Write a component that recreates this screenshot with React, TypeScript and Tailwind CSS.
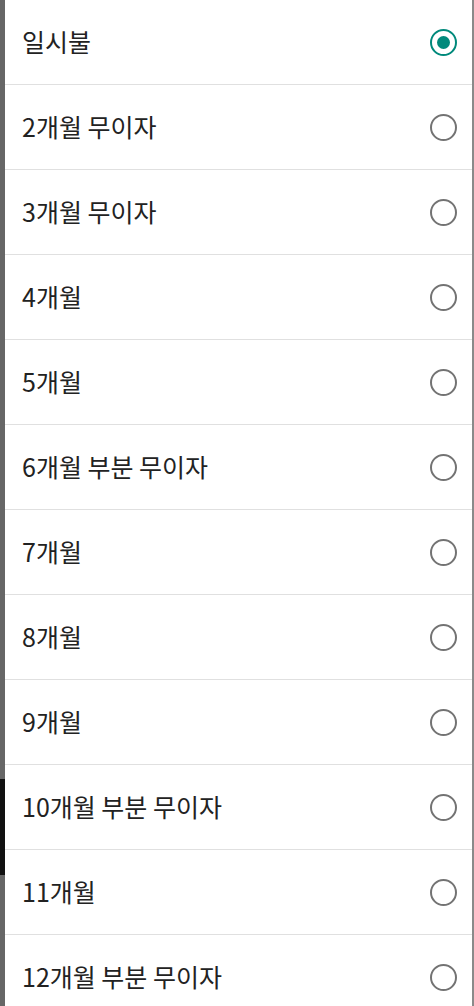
const options = [
  "일시불",
  "2개월 무이자",
  "3개월 무이자",
  "4개월",
  "5개월",
  "6개월 부분 무이자",
  "7개월",
  "8개월",
  "9개월",
  "10개월 부분 무이자",
  "11개월",
  "12개월 부분 무이자",
];

const Radio = ({ checked }: { checked: boolean }) => (
  <span
    className={`flex h-[27px] w-[27px] items-center justify-center rounded-full border-[2.5px] ${
      checked ? "border-[#00897b]" : "border-[#737373]"
    }`}
  >
    {checked && <span className="h-[13px] w-[13px] rounded-full bg-[#00897b]"></span>}
  </span>
);

const App = () => {
  const selected = 0;
  return (
    <div className="flex h-[1006px] w-[474px] overflow-hidden bg-[#666666]">
      <div className="flex w-[5px] shrink-0 flex-col">
        <div className="h-[779px] bg-[#666666]"></div>
        <div className="h-[96px] bg-[#111111]"></div>
        <div className="flex-1 bg-[#666666]"></div>
      </div>
      <ul
        className="flex w-[467px] shrink-0 flex-col bg-white"
        style={{ fontFamily: '"Noto Sans CJK KR", "Noto Sans", sans-serif' }}
      >
        {options.map((label, i) => (
          <li
            key={label}
            className={`flex shrink-0 items-center justify-between pl-[17px] pr-[15px] ${
              i > 0 ? "h-[85px] border-t border-[#e0e0e0]" : "h-[84px]"
            }`}
          >
            <span className="-mt-[2px] text-[25px] leading-none text-[#222222]">{label}</span>
            <Radio checked={i === selected} />
          </li>
        ))}
      </ul>
      <div className="w-[2px] shrink-0 bg-[#8a8a8a]"></div>
    </div>
  );
};

export default App;
